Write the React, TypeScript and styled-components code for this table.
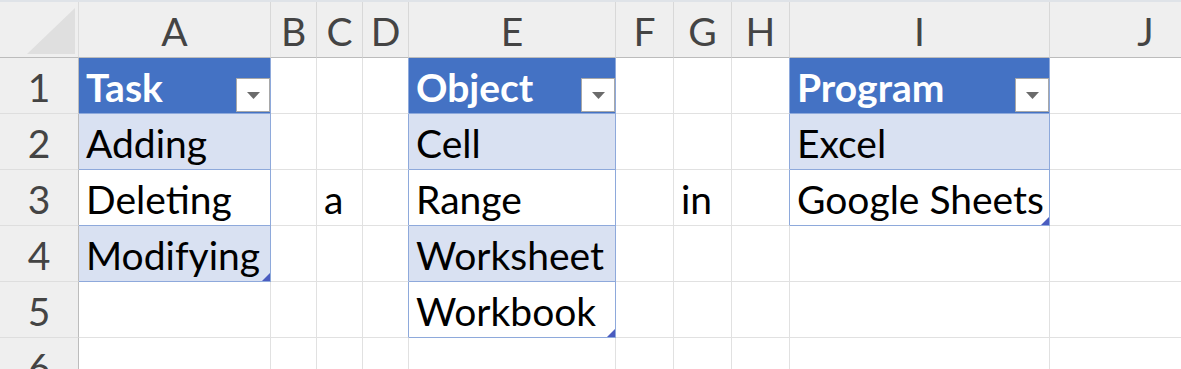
import React from 'react';
import styled, { createGlobalStyle } from 'styled-components';

const GlobalStyle = createGlobalStyle`
  html, body {
    margin: 0;
    padding: 0;
    background: #ffffff;
    overflow: hidden;
  }
`;

type Fill = 'none' | 'head' | 'band';

interface Column {
  key: string;
  width: number;
}

interface TableDef {
  col: string;
  header: string;
  items: string[];
}

const COLUMNS: Column[] = [
  { key: 'A', width: 192 },
  { key: 'B', width: 46 },
  { key: 'C', width: 46 },
  { key: 'D', width: 46 },
  { key: 'E', width: 207 },
  { key: 'F', width: 58 },
  { key: 'G', width: 58 },
  { key: 'H', width: 58 },
  { key: 'I', width: 260 },
  { key: 'J', width: 192 },
];

const TABLES: TableDef[] = [
  { col: 'A', header: 'Task', items: ['Adding', 'Deleting', 'Modifying'] },
  { col: 'E', header: 'Object', items: ['Cell', 'Range', 'Worksheet', 'Workbook'] },
  { col: 'I', header: 'Program', items: ['Excel', 'Google Sheets'] },
];

const LOOSE: Record<string, string> = {
  C3: 'a',
  G3: 'in',
};

const ROW_COUNT = 6;

const GRID = '#e1e1e1';
const TABLE_LINE = '#8ea9db';

const Sheet = styled.div<{ $cols: string }>`
  display: grid;
  grid-template-columns: ${(p) => p.$cols};
  grid-auto-rows: 56px;
  width: max-content;
  border-top: 2px solid #dfe3e8;
  font-family: Lato, 'Liberation Sans', sans-serif;
  font-size: 39px;
  line-height: 58px;
`;

const Corner = styled.div`
  box-sizing: border-box;
  background: #efefef;
  border-right: 1px solid #dcdcdc;
  border-bottom: 1px solid #bcbcbc;
  display: flex;
  justify-content: flex-end;
  align-items: flex-end;
  padding: 0 3px 3px 0;
`;

const CornerMark = styled.div`
  width: 48px;
  height: 46px;
  background: #dfdfdf;
  clip-path: polygon(100% 0, 100% 100%, 0 100%);
`;

const ColumnHeader = styled.div`
  box-sizing: border-box;
  background: #efefef;
  color: #444444;
  text-align: center;
  border-right: 1px solid #d8d8d8;
  border-bottom: 1px solid #bcbcbc;
`;

const RowHeader = styled.div`
  box-sizing: border-box;
  background: #efefef;
  color: #444444;
  text-align: center;
  border-right: 1px solid #bcbcbc;
  border-bottom: 1px solid #dedede;
`;

const Cell = styled.div<{ $fill: Fill; $right: string; $bottom: string }>`
  position: relative;
  box-sizing: border-box;
  display: flex;
  align-items: stretch;
  padding-left: 7px;
  white-space: nowrap;
  border-right: 1px solid ${(p) => p.$right};
  border-bottom: 1px solid ${(p) => p.$bottom};
  background: ${(p) =>
    p.$fill === 'head' ? '#4472c4' : p.$fill === 'band' ? '#d9e1f2' : '#ffffff'};
  color: ${(p) => (p.$fill === 'head' ? '#ffffff' : '#000000')};
  font-weight: ${(p) => (p.$fill === 'head' ? 700 : 400)};
`;

const FilterButton = styled.div`
  box-sizing: border-box;
  width: 34px;
  height: 34px;
  margin-left: auto;
  margin-bottom: 1px;
  align-self: flex-end;
  background: #ffffff;
  border: 1px solid #a8a8a8;
  display: flex;
  align-items: center;
  justify-content: center;
`;

const ResizeHandle = styled.div`
  position: absolute;
  right: 0;
  bottom: 0;
  width: 8px;
  height: 8px;
  background: #4a5cc0;
  clip-path: polygon(100% 0, 100% 100%, 0 100%);
`;

const FilterArrow = () => (
  <svg width="13" height="7" viewBox="0 0 13 7">
    <polygon points="0,0 13,0 6.5,7" fill="#6b6b6b" />
  </svg>
);

type CellInfo = { text: string; fill: Fill; last: boolean; head: boolean };

function cellAt(col: string, row: number): CellInfo | null {
  const t = TABLES.find((x) => x.col === col);
  if (!t) return null;
  if (row === 1) return { text: t.header, fill: 'head', last: false, head: true };
  const i = row - 2;
  if (i >= 0 && i < t.items.length) {
    return {
      text: t.items[i],
      fill: i % 2 === 0 ? 'band' : 'none',
      last: i === t.items.length - 1,
      head: false,
    };
  }
  return null;
}

export default function App() {
  const template = ['79px', ...COLUMNS.map((c) => `${c.width}px`)].join(' ');
  const rows = Array.from({ length: ROW_COUNT }, (_, i) => i + 1);

  return (
    <>
      <GlobalStyle />
      <Sheet $cols={template}>
        <Corner>
          <CornerMark />
        </Corner>
        {COLUMNS.map((c) => (
          <ColumnHeader key={c.key}>{c.key}</ColumnHeader>
        ))}
        {rows.map((r) => (
          <React.Fragment key={r}>
            <RowHeader>{r}</RowHeader>
            {COLUMNS.map((c, ci) => {
              const info = cellAt(c.key, r);
              const next = COLUMNS[ci + 1];
              const nextInTable = next ? !!cellAt(next.key, r) : false;
              const right = info || nextInTable ? TABLE_LINE : GRID;
              const bottom = info ? TABLE_LINE : GRID;
              const text = info ? info.text : LOOSE[`${c.key}${r}`] ?? '';
              return (
                <Cell key={c.key} $fill={info ? info.fill : 'none'} $right={right} $bottom={bottom}>
                  <span>{text}</span>
                  {info?.head && (
                    <FilterButton>
                      <FilterArrow />
                    </FilterButton>
                  )}
                  {info?.last && <ResizeHandle />}
                </Cell>
              );
            })}
          </React.Fragment>
        ))}
      </Sheet>
    </>
  );
}
